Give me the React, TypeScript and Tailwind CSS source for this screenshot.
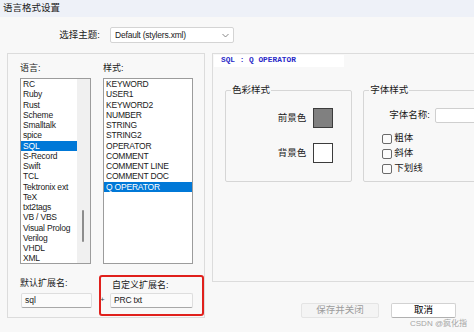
import React from "react";

const languages = [
  "RC",
  "Ruby",
  "Rust",
  "Scheme",
  "Smalltalk",
  "spice",
  "SQL",
  "S-Record",
  "Swift",
  "TCL",
  "Tektronix ext",
  "TeX",
  "txt2tags",
  "VB / VBS",
  "Visual Prolog",
  "Verilog",
  "VHDL",
  "XML",
];

const styles = [
  "KEYWORD",
  "USER1",
  "KEYWORD2",
  "NUMBER",
  "STRING",
  "STRING2",
  "OPERATOR",
  "COMMENT",
  "COMMENT LINE",
  "COMMENT DOC",
  "Q OPERATOR",
];

const ListRow = ({ text, selected }: { text: string; selected: boolean }) => (
  <div
    className={`h-[10.25px] pl-[2px] leading-[10.25px] whitespace-nowrap text-[8.5px] tracking-[-0.2px] ${
      selected ? "bg-[#0078d7] text-white" : "text-[#1a1a1a]"
    }`}
  >
    {text}
  </div>
);

const Checkbox = ({ label }: { label: string }) => (
  <div className="flex items-center h-[15px] gap-[2px]">
    <div className="w-[10px] h-[10px] border border-[#6a6a6a] rounded-[2px] bg-[#fbfbfb]" />
    <span className="text-[9.5px] text-[#1a1a1a] whitespace-nowrap">{label}</span>
  </div>
);

const App = () => {
  return (
    <div className="relative w-[474px] h-[332px] overflow-hidden bg-[#f8f8f8] font-['Liberation_Sans','Noto_Sans_CJK_SC',sans-serif] text-[#1a1a1a]">
      {/* title bar */}
      <div className="h-[17px] bg-[#eef1f8] pl-[3px] flex items-center text-[9.5px]">
        语言格式设置
      </div>

      {/* theme select */}
      <div className="flex items-center mt-[10px] h-[16px]">
        <div className="w-[100px] text-right text-[9.5px]">选择主题:</div>
        <div className="ml-[10px] w-[124px] h-[16px] bg-white border border-[#d4d4d4] rounded-[2px] flex items-center justify-between pl-[4px] pr-[4px]">
          <span className="text-[8.5px] tracking-[-0.2px]">Default (stylers.xml)</span>
          <svg width="7" height="5" viewBox="0 0 7 5" fill="none">
            <path d="M0.5 1 L3.5 4 L6.5 1" stroke="#7a7a7a" strokeWidth="0.9" />
          </svg>
        </div>
      </div>

      <div className="flex mt-[10px]">
        {/* left panel */}
        <div className="ml-[7px] w-[199px] h-[265px] border border-[#dcdcdc] pt-[8px] pl-[12px]">
          <div className="flex gap-[12px]">
            <div className="w-[71px]">
              <div className="h-[12px] leading-[12px] text-[9px] mb-[4px]">语言:</div>
              <div className="h-[186px] bg-white border border-[#9c9c9c] flex overflow-hidden">
                <div className="flex-1">
                  {languages.map((l) => (
                    <ListRow key={l} text={l} selected={l === "SQL"} />
                  ))}
                </div>
                <div className="w-[13px] bg-[#f0f0f0] relative">
                  <div className="absolute left-[5px] top-[131px] w-[2px] h-[32px] rounded-full bg-[#8c8c8c]" />
                </div>
              </div>
            </div>
            <div className="w-[90px]">
              <div className="h-[12px] leading-[12px] text-[9px] mb-[4px]">样式:</div>
              <div className="h-[186px] bg-white border border-[#9c9c9c]">
                {styles.map((s) => (
                  <ListRow key={s} text={s} selected={s === "Q OPERATOR"} />
                ))}
              </div>
            </div>
          </div>

          {/* extension row */}
          <div className="flex mt-[11px]">
            <div className="w-[72px]">
              <div className="mt-[2px] h-[12px] leading-[12px] text-[9px]">默认扩展名:</div>
              <div className="mt-[4px] ml-[1px] w-[71px] h-[15px] bg-[#fbfbfb] border border-[#dedede] border-b-[#a8a8a8] rounded-[2px] flex items-center pl-[3px] text-[8.5px]">
                sql
              </div>
            </div>
            <div className="relative ml-[7px] w-[105px] h-[41px] border-2 border-[#e0201c] rounded-[3px] pl-[9px] pt-[2px]">
              <span className="absolute left-[-1px] top-[19px] text-[8px] leading-[8px] text-[#444]">+</span>
              <div className="ml-[2px] h-[12px] leading-[12px] text-[9px]">自定义扩展名:</div>
              <div className="mt-[2px] w-[83px] h-[15px] bg-[#fbfbfb] border border-[#dedede] border-b-[#a8a8a8] rounded-[2px] flex items-center pl-[3px] text-[8.5px] tracking-[-0.2px]">
                PRC txt
              </div>
            </div>
          </div>
        </div>

        {/* right column */}
        <div className="ml-[7px] flex flex-col">
          <div className="w-[300px] h-[229px] border border-[#dcdcdc] p-[1px]">
            <div className="w-[130px] h-[12px] bg-white pl-[7px] flex items-center font-['Liberation_Mono',monospace] font-bold text-[7.8px] text-[#2a2ac8]">
              SQL : Q OPERATOR
            </div>
            <div className="flex mt-[17px] ml-[11px] gap-[11px]">
              <fieldset className="w-[130px] h-[98px] border border-[#d6d6d6] rounded-[2px] pl-[5px]">
                <legend className="px-[1px] text-[9.5px] leading-[12px]">色彩样式</legend>
                <div className="flex flex-col items-end pr-[18px] mt-[12px] gap-[15px]">
                  <div className="flex items-center gap-[7px]">
                    <span className="text-[9.5px]">前景色</span>
                    <div className="w-[20px] h-[20px] bg-[#808080] border border-[#3c3c3c]" />
                  </div>
                  <div className="flex items-center gap-[7px]">
                    <span className="text-[9.5px]">背景色</span>
                    <div className="w-[20px] h-[20px] bg-white border border-[#3c3c3c]" />
                  </div>
                </div>
              </fieldset>
              <fieldset className="w-[150px] h-[98px] border border-[#d6d6d6] rounded-[2px] pl-[5px]">
                <legend className="px-[1px] text-[9.5px] leading-[12px]">字体样式</legend>
                <div className="flex items-center mt-[12px] ml-[20px] gap-[5px]">
                  <span className="text-[9.5px] whitespace-nowrap">字体名称:</span>
                  <div className="w-[70px] h-[15px] bg-white border border-[#cfcfcf] rounded-[2px]" />
                </div>
                <div className="flex flex-col ml-[13px] mt-[8px]">
                  <Checkbox label="粗体" />
                  <Checkbox label="斜体" />
                  <Checkbox label="下划线" />
                </div>
              </fieldset>
            </div>
          </div>

          {/* buttons */}
          <div className="flex mt-[21px] pl-[89px] gap-[12px]">
            <div className="w-[78px] h-[15px] bg-[#f4f4f4] border border-[#e4e4e4] rounded-[2px] flex items-center justify-center text-[9.5px] text-[#9c9c9c]">
              保存并关闭
            </div>
            <div className="w-[65px] h-[15px] bg-white border border-[#d2d2d2] border-b-[#b0b0b0] rounded-[2px] flex items-center justify-center text-[9.5px] text-black">
              取消
            </div>
          </div>
        </div>
      </div>

      <div className="absolute right-[7px] bottom-[3px] text-[8px] leading-[10px] text-[#a5a5a5]">
        CSDN @疯化指
      </div>
    </div>
  );
};

export default App;
